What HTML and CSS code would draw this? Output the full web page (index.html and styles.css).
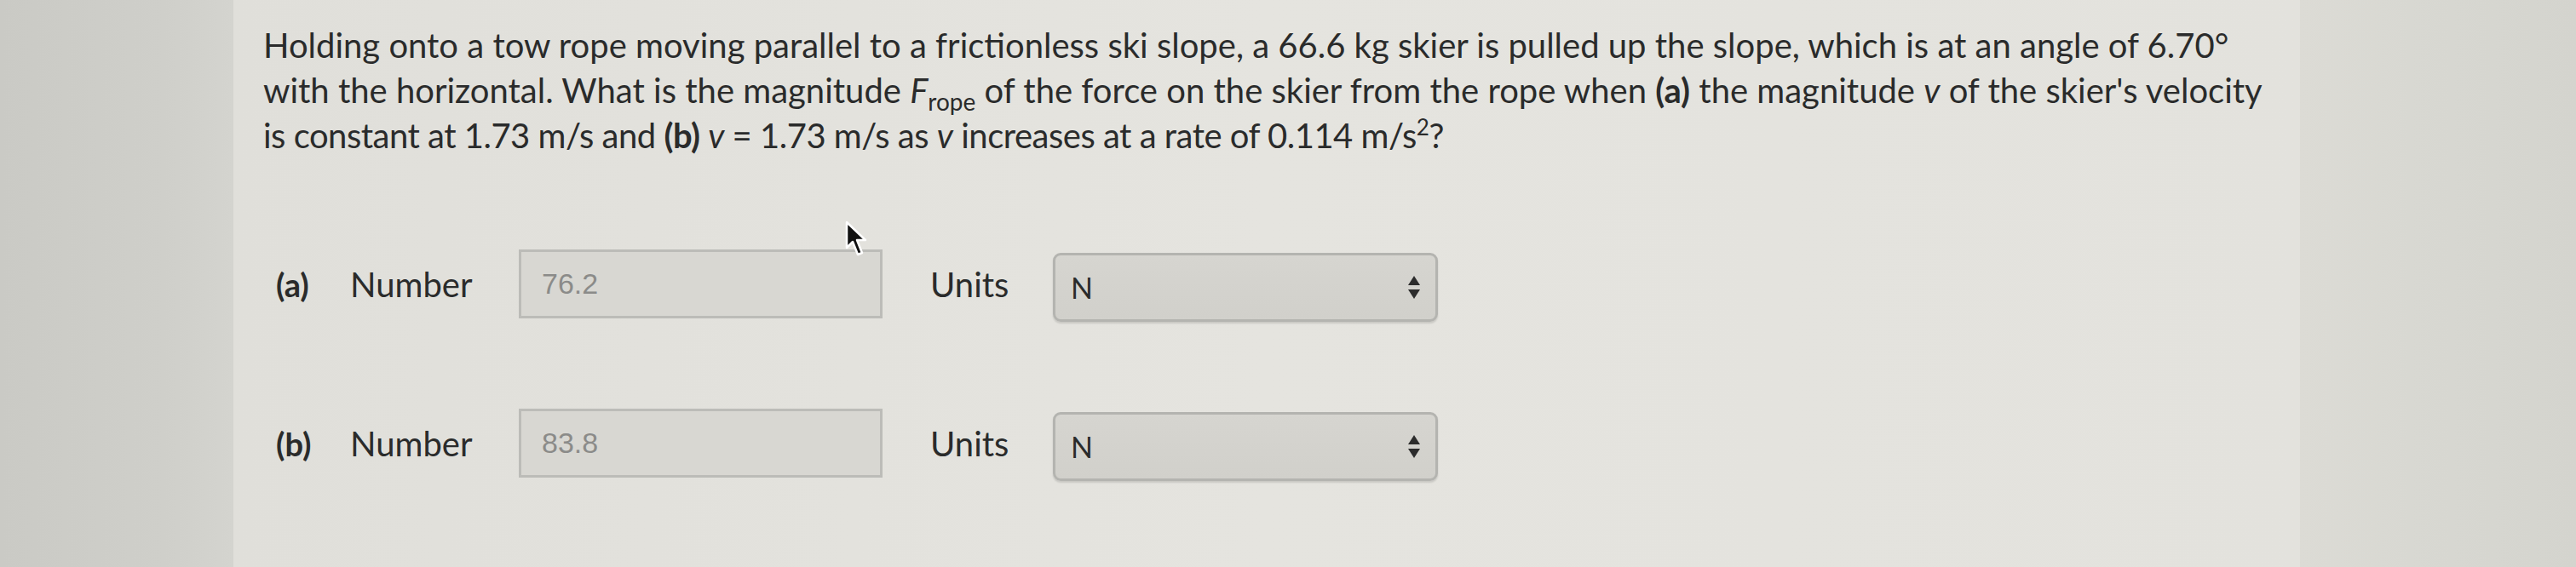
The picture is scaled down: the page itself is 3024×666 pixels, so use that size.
FILE: index.html
```html
<!DOCTYPE html>
<html>
<head>
<meta charset="utf-8">
<link rel="stylesheet" href="styles.css">
</head>
<body>
<div class="screen">
  <div class="edge-left"></div>
  <main class="content">
    <p class="question">Holding onto a tow rope moving parallel to a frictionless ski slope, a 66.6 kg skier is pulled up the slope, which is at an angle of 6.70°<br>with the horizontal. What is the magnitude <i>F</i><sub>rope</sub> of the force on the skier from the rope when <b>(a)</b> the magnitude <i>v</i> of the skier's velocity<br><span class="tight">is constant at 1.73 m/s and <b>(b)</b> <i>v</i> = 1.73 m/s as <i>v</i> increases at a rate of 0.114 m/s<sup>2</sup>?</span></p>

    <div class="answers">
      <div class="row">
        <span class="part">(a)</span>
        <span class="label">Number</span>
        <div class="numbox">76.2</div>
        <span class="units">Units</span>
        <div class="select">
          <span class="sel-val">N</span>
          <span class="arrows"><span class="up"></span><span class="down"></span></span>
        </div>
        <svg class="cursor" width="30" height="44" viewBox="0 0 30 44">
          <path d="M3 2 L3 32 L10 25 L16 40 L21 38 L15 23 L25 23 Z" fill="#111" stroke="#fff" stroke-width="2.5" stroke-linejoin="round"/>
        </svg>
      </div>
      <div class="row">
        <span class="part">(b)</span>
        <span class="label">Number</span>
        <div class="numbox">83.8</div>
        <span class="units">Units</span>
        <div class="select">
          <span class="sel-val">N</span>
          <span class="arrows"><span class="up"></span><span class="down"></span></span>
        </div>
      </div>
    </div>
  </main>
  <div class="edge-right"></div>
</div>
</body>
</html>
```

FILE: styles.css
```css
html, body {
  margin: 0;
  padding: 0;
  height: 666px;
  overflow: hidden;
}
body {
  background: #e2e1dc;
  font-family: Lato, "Open Sans", sans-serif;
  color: #2a2b2b;
}
.screen {
  display: flex;
  width: 3024px;
  height: 666px;
}
.edge-left {
  width: 274px;
  flex: none;
  background: linear-gradient(90deg, #cacac5 0%, #cfcfca 70%, #d4d4cf 100%);
}
.edge-right {
  width: 324px;
  flex: none;
  background: linear-gradient(90deg, #dcdbd5 0%, #d8d8d2 40%, #d4d4ce 100%);
}
.content {
  flex: 1;
  padding: 27px 0 0 35px;
  background: linear-gradient(90deg, #e0dfda 0%, #e5e4df 50%, #e3e2dd 100%);
  position: relative;
}
.question {
  margin: 0;
  font-size: 40px;
  line-height: 53px;
  white-space: nowrap;
}
.tight {
  letter-spacing: -0.5px;
}
.question sub {
  font-size: 28px;
  vertical-align: -9px;
  line-height: 0;
}
.question sup {
  font-size: 26px;
  vertical-align: 15px;
  line-height: 0;
}
.answers {
  margin-top: 107px;
  padding-left: 15px;
  display: flex;
  flex-direction: column;
  gap: 106px;
}
.row {
  display: flex;
  align-items: center;
  position: relative;
  height: 81px;
}
.part {
  font-weight: 700;
  font-size: 38px;
  width: 87px;
}
.label {
  font-size: 40px;
  width: 198px;
}
.numbox {
  box-sizing: border-box;
  width: 427px;
  height: 81px;
  border: 3px solid #bcbcb8;
  background: #d8d7d2;
  color: #8b8b89;
  font-family: "Liberation Sans", Arial, sans-serif;
  font-size: 34px;
  padding-left: 24px;
  display: flex;
  align-items: center;
}
.units {
  font-size: 40px;
  margin-left: 56px;
  width: 144px;
}
.select {
  box-sizing: border-box;
  width: 452px;
  height: 81px;
  border: 3px solid #b4b4b0;
  border-radius: 9px;
  background: linear-gradient(180deg, #d6d5d0 0%, #d1d0cb 100%);
  box-shadow: 0 2px 2px rgba(0,0,0,0.12);
  display: flex;
  align-items: center;
  justify-content: space-between;
  padding: 0 18px 0 18px;
  margin-top: 8px;
}
.sel-val {
  font-size: 34px;
  color: #2a2b2b;
}
.arrows {
  display: flex;
  flex-direction: column;
  gap: 5px;
  padding: 2px 0;
}
.up, .down {
  width: 0;
  height: 0;
  border-left: 7px solid transparent;
  border-right: 7px solid transparent;
}
.up {
  border-bottom: 11px solid #2c2c2c;
}
.down {
  border-top: 11px solid #2c2c2c;
}
.cursor {
  position: absolute;
  left: 667px;
  top: -34px;
}
```
